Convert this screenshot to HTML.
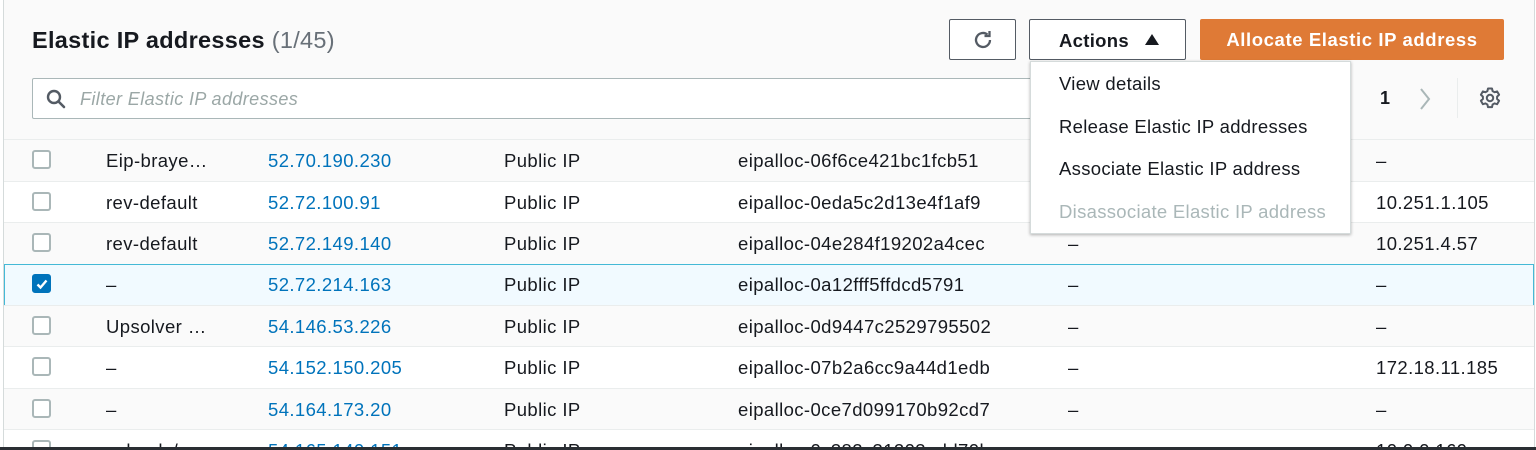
<!DOCTYPE html>
<html><head><meta charset="utf-8"><style>
*{box-sizing:border-box;margin:0;padding:0}
html,body{width:1536px;height:450px;overflow:hidden}
body{background:#fff;font-family:"Liberation Sans",Arial,sans-serif;color:#16191f;position:relative}
.panel{position:absolute;left:3px;top:0;width:1532px;height:450px;border-left:1px solid #d5dbdb;border-right:1px solid #d5dbdb;background:#fafafa}
.abs{position:absolute}
.title{left:32px;top:27px;font-size:23.5px;font-weight:bold;color:#16191f;letter-spacing:.3px}
.title span{font-weight:normal;color:#687078}
.search{left:32px;top:78px;width:1020px;height:41px;border:1px solid #aab7b8;border-radius:2px;background:#fff}
.search .ph{position:absolute;left:47px;top:10px;font-size:18px;font-style:italic;color:#9ba7a6;letter-spacing:.4px}
.btn{border:1px solid #545b64;border-radius:2px;background:#fff;height:41px;top:19px}
.row{position:absolute;left:4px;width:1530px;height:42px;border-top:1px solid #eaeded;font-size:18.5px;letter-spacing:.4px}
.row div{position:absolute;top:10px;white-space:nowrap}
.cb{left:28px!important;top:10px!important;width:19px;height:19px;border:2px solid #aab7b8;border-radius:3px;background:#fff}
.cb.on{background:#0073bb;border-color:#0073bb}
.c1{left:102px}.c2{left:264px;color:#0073bb}.c3{left:500px}.c4{left:734px}.c5{left:1064px}.c6{left:1372px}
.menu{left:1030px;top:61px;width:321px;height:173px;background:#fff;border:1px solid #d5dbdb;box-shadow:0 1px 3px rgba(0,0,0,.3)}
.menu div{position:absolute;left:28px;font-size:18.5px;color:#16191f;letter-spacing:.3px;white-space:nowrap}
</style></head><body>
<div class="panel"></div>
<div class="abs title">Elastic IP addresses <span>(1/45)</span></div>
<div class="abs search">
<svg class="abs" style="left:13px;top:10px" width="20" height="20" viewBox="0 0 20 20"><circle cx="8" cy="8" r="6" fill="none" stroke="#545b64" stroke-width="2.4"/><path d="M12.5 12.5L18 18" stroke="#545b64" stroke-width="2.6" stroke-linecap="round"/></svg>
<div class="ph">Filter Elastic IP addresses</div></div>
<div class="abs" style="left:1380px;top:88px;font-size:18px;font-weight:bold">1</div>
<svg class="abs" style="left:1418px;top:86px" width="14" height="26" viewBox="0 0 14 26"><path d="M3 3l8 10-8 10" fill="none" stroke="#aab7b8" stroke-width="2"/></svg>
<div class="abs" style="left:1457px;top:78px;width:1px;height:40px;background:#eaeded"></div>
<svg class="abs" style="left:1478px;top:86px" width="24" height="24" viewBox="0 0 24 24"><circle cx="12" cy="12" r="3.2" fill="none" stroke="#545b64" stroke-width="2"/><path d="M10 2.5h4l.6 2.6 2 1.1 2.5-.8 2 3.4-2 1.8v2.4l2 1.8-2 3.4-2.5-.8-2 1.1-.6 2.6h-4l-.6-2.6-2-1.1-2.5.8-2-3.4 2-1.8v-2.4l-2-1.8 2-3.4 2.5.8 2-1.1z" fill="none" stroke="#545b64" stroke-width="2" stroke-linejoin="round"/></svg>

<div class="abs btn" style="left:949px;width:67px"><svg class="abs" style="left:22px;top:9px" width="22" height="22" viewBox="0 0 22 22"><path d="M18 11a7 7 0 1 1-2.5-5.4" fill="none" stroke="#545b64" stroke-width="2.3"/><path d="M17.5 2v5h-5" fill="none" stroke="#545b64" stroke-width="2.3"/></svg></div>
<div class="abs btn" style="left:1029px;width:157px"><div class="abs" style="left:29px;top:10px;font-size:18.5px;font-weight:bold;letter-spacing:.3px">Actions</div><svg class="abs" style="left:114px;top:13px" width="16" height="13" viewBox="0 0 16 13"><path d="M1 12L8 1l7 11z" fill="#16191f"/></svg></div>
<div class="abs" style="left:1200px;top:19px;width:304px;height:41px;background:#df7a36;border-radius:2px;color:#fff;font-size:18.5px;font-weight:bold;text-align:center;line-height:41px;letter-spacing:.6px">Allocate Elastic IP address</div>

<div class="row" style="top:139px;background:#fafafa"><div class="cb"></div><div class="c1">Eip-braye…</div><div class="c2">52.70.190.230</div><div class="c3">Public IP</div><div class="c4">eipalloc-06f6ce421bc1fcb51</div><div class="c5">–</div><div class="c6">–</div></div>
<div class="row" style="top:181px;background:#fff"><div class="cb"></div><div class="c1">rev-default</div><div class="c2">52.72.100.91</div><div class="c3">Public IP</div><div class="c4">eipalloc-0eda5c2d13e4f1af9</div><div class="c5">–</div><div class="c6">10.251.1.105</div></div>
<div class="row" style="top:222px;background:#fafafa"><div class="cb"></div><div class="c1">rev-default</div><div class="c2">52.72.149.140</div><div class="c3">Public IP</div><div class="c4">eipalloc-04e284f19202a4cec</div><div class="c5">–</div><div class="c6">10.251.4.57</div></div>
<div class="row" style="top:264px;background:#f1faff;box-shadow:inset 0 0 0 1px #44b9d6;border-top:none"><div class="cb on"><svg style="position:absolute;left:1px;top:1px" width="14" height="14" viewBox="0 0 14 14"><path d="M2.5 7.5l3 3 6-7" fill="none" stroke="#fff" stroke-width="2.4"/></svg></div><div class="c1">–</div><div class="c2">52.72.214.163</div><div class="c3">Public IP</div><div class="c4">eipalloc-0a12fff5ffdcd5791</div><div class="c5">–</div><div class="c6">–</div></div>
<div class="row" style="top:305px;background:#fafafa"><div class="cb"></div><div class="c1">Upsolver …</div><div class="c2">54.146.53.226</div><div class="c3">Public IP</div><div class="c4">eipalloc-0d9447c2529795502</div><div class="c5">–</div><div class="c6">–</div></div>
<div class="row" style="top:346px;background:#fff"><div class="cb"></div><div class="c1">–</div><div class="c2">54.152.150.205</div><div class="c3">Public IP</div><div class="c4">eipalloc-07b2a6cc9a44d1edb</div><div class="c5">–</div><div class="c6">172.18.11.185</div></div>
<div class="row" style="top:388px;background:#fafafa"><div class="cb"></div><div class="c1">–</div><div class="c2">54.164.173.20</div><div class="c3">Public IP</div><div class="c4">eipalloc-0ce7d099170b92cd7</div><div class="c5">–</div><div class="c6">–</div></div>
<div class="row" style="top:429px;background:#fff"><div class="cb"></div><div class="c1">pclouds/</div><div class="c2">54.165.140.151</div><div class="c3">Public IP</div><div class="c4">eipalloc-0c382c31203add70b</div><div class="c5"></div><div class="c6">10.0.0.169</div></div>
<div class="abs" style="left:0;top:447px;width:1536px;height:3px;background:#2a2e33"></div>

<div class="abs menu">
<div style="top:11px">View details</div>
<div style="top:54px">Release Elastic IP addresses</div>
<div style="top:96px">Associate Elastic IP address</div>
<div style="top:139px;color:#aab7b8">Disassociate Elastic IP address</div>
</div>
</body></html>
